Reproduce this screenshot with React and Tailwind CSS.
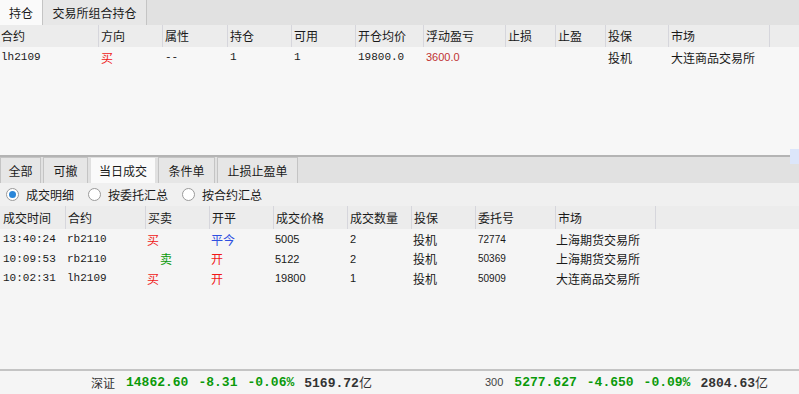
import React from 'react';

// column widths are written out as full class names so Tailwind picks them up
const posCols = [
  { t: '合约', w: 'w-[98px]' }, { t: '方向', w: 'w-[64px]' }, { t: '属性', w: 'w-[65px]' },
  { t: '持仓', w: 'w-[64px]' }, { t: '可用', w: 'w-[64px]' }, { t: '开仓均价', w: 'w-[68px]' },
  { t: '浮动盈亏', w: 'w-[82px]' }, { t: '止损', w: 'w-[50px]' }, { t: '止盈', w: 'w-[50px]' },
  { t: '投保', w: 'w-[63px]' }, { t: '市场', w: 'w-[101px]' },
];

const tradeCols = [
  { t: '成交时间', w: 'w-[65px]' }, { t: '合约', w: 'w-[80px]' }, { t: '买卖', w: 'w-[64px]' },
  { t: '开平', w: 'w-[64px]' }, { t: '成交价格', w: 'w-[74px]' }, { t: '成交数量', w: 'w-[64px]' },
  { t: '投保', w: 'w-[64px]' }, { t: '委托号', w: 'w-[80px]' }, { t: '市场', w: 'w-[100px]' },
];

const trades = [
  { time: '13:40:24', code: 'rb2110', side: '买', sc: 'pl-[2px] text-[#f01818]', off: '平今', oc: 'text-[#2f4fe0]', price: '5005', qty: '2', no: '72774', mkt: '上海期货交易所' },
  { time: '10:09:53', code: 'rb2110', side: '卖', sc: 'pl-[15px] text-[#0a9a0a]', off: '开', oc: 'text-[#f01818]', price: '5122', qty: '2', no: '50369', mkt: '上海期货交易所' },
  { time: '10:02:31', code: 'lh2109', side: '买', sc: 'pl-[2px] text-[#f01818]', off: '开', oc: 'text-[#f01818]', price: '19800', qty: '1', no: '50909', mkt: '大连商品交易所' },
];

const mono = "font-['Liberation_Mono',monospace]";
const sans = "font-['Liberation_Sans',sans-serif]";
const cjk = "font-['Noto_Sans_CJK_SC','Noto_Sans',sans-serif]";

function HeaderRow({ cols, h, pad }) {
  return (
    <div className={`flex bg-[#ececec] ${h}`}>
      {cols.map((c, i) => (
        <div
          key={c.t + i}
          className={`flex items-center shrink-0 ${c.w} ${i === 0 ? pad : 'pl-[2px] border-l border-[#d6d6dc]'}`}
        >
          {c.t}
        </div>
      ))}
      <div className="border-l border-[#d6d6dc] flex-1" />
    </div>
  );
}

function Tab({ label, w, active }) {
  return (
    <div
      className={`h-[26px] flex items-center justify-center shrink-0 border border-b-0 ${w} ${active ? 'bg-[#fafafa] border-[#e0e0e0]' : 'bg-[#e6e6e6] border-[#c4c4c4]'}`}
    >
      {label}
    </div>
  );
}

function Radio({ label, on }) {
  return (
    <div className="flex items-center gap-[7px] mr-[14px]">
      <span className="w-[13px] h-[13px] rounded-full border border-[#9a9a9a] bg-white flex items-center justify-center">
        {on && <span className="w-[7px] h-[7px] rounded-full bg-[#2a86d8]" />}
      </span>
      <span>{label}</span>
    </div>
  );
}

function Quote({ name, nameCls, vals, amount }) {
  return (
    <div className="flex items-center">
      <span className={`mr-[11px] ${nameCls}`}>{name}</span>
      {vals.map((v) => (
        <span key={v} className={`${mono} font-bold text-[#0a9a0a] mr-[10px]`}>{v}</span>
      ))}
      <span className={`${mono} font-bold text-[#333]`}>
        {amount}<span className={`${cjk} font-normal`}>亿</span>
      </span>
    </div>
  );
}

export default function App() {
  return (
    <div className={`${cjk} w-[799px] h-[394px] bg-[#f5f5f5] text-[12px] leading-none text-[#1a1a1a] flex flex-col overflow-hidden relative`}>
      {/* position tabs */}
      <div className="h-[25px] bg-[#e1e1e1] flex items-end">
        <div className="w-[42px] h-[25px] bg-[#fafafa] flex items-center justify-center">持仓</div>
        <div className="w-[105px] h-[25px] bg-[#e7e7e7] border-x border-[#c4c4c4] flex items-center justify-center">交易所组合持仓</div>
      </div>

      <HeaderRow cols={posCols} h="h-[22px]" pad="pl-[1px]" />
      <div className="flex h-[21px] items-center bg-[#f7f7f7]">
        <div className={`w-[98px] pl-[1px] text-[11px] ${mono}`}>lh2109</div>
        <div className="w-[64px] pl-[3px] text-[#f01818]">买</div>
        <div className={`w-[65px] pl-[3px] text-[11px] ${mono}`}>--</div>
        <div className={`w-[64px] pl-[3px] text-[11px] ${mono}`}>1</div>
        <div className={`w-[64px] pl-[3px] text-[11px] ${mono}`}>1</div>
        <div className={`w-[68px] pl-[3px] text-[11px] ${mono}`}>19800.0</div>
        <div className={`w-[82px] pl-[3px] text-[11px] text-[#c03232] ${sans}`}>3600.0</div>
        <div className="w-[100px]" />
        <div className="w-[63px] pl-[3px]">投机</div>
        <div className="w-[101px] pl-[3px]">大连商品交易所</div>
      </div>

      <div className="h-[87px] bg-[#f7f7f7]" />
      <div className="h-[2px] bg-[#b4b4b4]" />

      {/* order tabs */}
      <div className="h-[26px] bg-[#e1e1e1] flex items-end gap-[2px]">
        <Tab label="全部" w="w-[41px]" />
        <Tab label="可撤" w="w-[45px]" />
        <Tab label="当日成交" w="w-[66px]" active />
        <Tab label="条件单" w="w-[57px]" />
        <Tab label="止损止盈单" w="w-[81px]" />
      </div>

      <div className="h-[23px] bg-[#f0f0f0] flex items-center pl-[6px]">
        <Radio label="成交明细" on />
        <Radio label="按委托汇总" />
        <Radio label="按合约汇总" />
      </div>

      <HeaderRow cols={tradeCols} h="h-[23px]" pad="pl-[3px]" />

      <div className="flex flex-col pt-[1px]">
        {trades.map((r) => (
          <div key={r.time} className="flex h-[19.5px] items-center">
            <div className={`w-[65px] pl-[3px] text-[11px] ${mono}`}>{r.time}</div>
            <div className={`w-[80px] pl-[2px] text-[11px] ${mono}`}>{r.code}</div>
            <div className={`w-[64px] ${r.sc}`}>{r.side}</div>
            <div className={`w-[64px] pl-[2px] ${r.oc}`}>{r.off}</div>
            <div className={`w-[74px] pl-[2px] text-[11px] ${sans}`}>{r.price}</div>
            <div className={`w-[64px] pl-[3px] text-[11px] ${sans}`}>{r.qty}</div>
            <div className="w-[64px] pl-[2px]">投机</div>
            <div className={`w-[80px] pl-[3px] text-[10px] ${sans}`}>{r.no}</div>
            <div className="w-[100px] pl-[1px]">{r.mkt}</div>
          </div>
        ))}
      </div>

      <div className="flex-1" />

      {/* index status bar */}
      <div className="h-[2px] bg-[#c4c4c4]" />
      <div className="h-[23px] bg-[#f5f5f5] flex items-center text-[13px]">
        <div className="w-[400px] pl-[91px]">
          <Quote name="深证" nameCls="text-[#333] text-[12px]" vals={['14862.60', '-8.31', '-0.06%']} amount="5169.72" />
        </div>
        <div className="pl-[85px]">
          <Quote name="300" nameCls={`text-[#444] text-[11px] ${sans}`} vals={['5277.627', '-4.650', '-0.09%']} amount="2804.63" />
        </div>
      </div>

      {/* splitter marker */}
      <div className="absolute right-0 top-[149px] w-[9px] h-[15px] bg-[#dce6fa]" />
    </div>
  );
}
